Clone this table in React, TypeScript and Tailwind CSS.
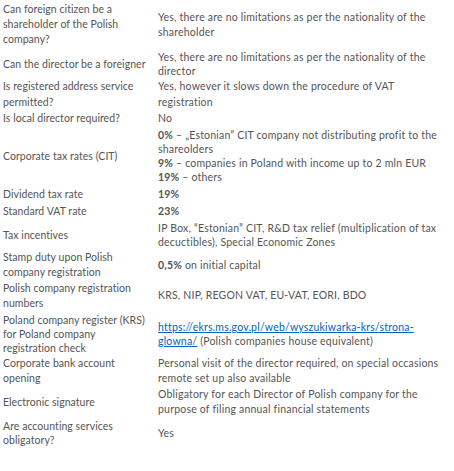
import React from "react";

type Row = { h: string; lead?: string; left: React.ReactNode; right: React.ReactNode };

const B = ({ children }: { children: React.ReactNode }) => (
  <span className="font-bold">{children}</span>
);

const rows: Row[] = [
  {
    h: "h-[49px]",
    lead: "leading-[15px]",
    left: (<>Can foreign citizen be a<br />shareholder of the Polish<br />company?</>),
    right: (<>Yes, there are no limitations as per the nationality of the<br />shareholder</>),
  },
  {
    h: "h-[30px]",
    lead: "leading-[14px]",
    left: (<>Can the director be a foreigner</>),
    right: (<>Yes, there are no limitations as per the nationality of the<br />director</>),
  },
  {
    h: "h-[31px]",
    lead: "leading-[15.5px]",
    left: (<>Is registered address service<br />permitted?</>),
    right: (<>Yes, however it slows down the procedure of VAT<br />registration</>),
  },
  {
    h: "h-[16.5px]",
    left: (<>Is local director required?</>),
    right: (<>No</>),
  },
  {
    h: "h-[59px]",
    lead: "leading-[14px]",
    left: (<>Corporate tax rates (CIT)</>),
    right: (
      <>
        <B>0%</B> – „Estonian” CIT company not distributing profit to the<br />shareolders<br />
        <B>9%</B> – companies in Poland with income up to 2 mln EUR<br />
        <B>19%</B> – others
      </>
    ),
  },
  { h: "h-[17px]", left: (<>Dividend tax rate</>), right: (<B>19%</B>) },
  { h: "h-[17px]", left: (<>Standard VAT rate</>), right: (<B>23%</B>) },
  {
    h: "h-[30px]",
    lead: "leading-[14px]",
    left: (<>Tax incentives</>),
    right: (<>IP Box, “Estonian” CIT, R&amp;D tax relief (multiplication of tax<br />decuctibles), Special Economic Zones</>),
  },
  {
    h: "h-[30.5px]",
    lead: "leading-[14.5px]",
    left: (<>Stamp duty upon Polish<br />company registration</>),
    right: (<><B>0,5%</B> on initial capital</>),
  },
  {
    h: "h-[31.5px]",
    lead: "leading-[15px]",
    left: (<>Polish company registration<br />numbers</>),
    right: (<>KRS, NIP, REGON VAT, EU-VAT, EORI, BDO</>),
  },
  {
    h: "h-[44px]",
    lead: "leading-[14px]",
    left: (<>Poland company register (KRS)<br />for Poland company<br />registration check</>),
    right: (
      <>
        <a className="text-[#0563c1] underline" href="#">https://ekrs.ms.gov.pl/web/wyszukiwarka-krs/strona-<br />glowna/</a> (Polish companies house equivalent)
      </>
    ),
  },
  {
    h: "h-[31px]",
    lead: "leading-[15px]",
    left: (<>Corporate bank account<br />opening</>),
    right: (<>Personal visit of the director required, on special occasions<br />remote set up also available</>),
  },
  {
    h: "h-[31px]",
    lead: "leading-[15px]",
    left: (<>Electronic signature</>),
    right: (<>Obligatory for each Director of Polish company for the<br />purpose of filing annual financial statements</>),
  },
  {
    h: "h-[31px]",
    lead: "leading-[14px]",
    left: (<>Are accounting services<br />obligatory?</>),
    right: (<>Yes</>),
  },
];

export default function App() {
  return (
    <div className="w-[454px] h-[471px] bg-white overflow-hidden text-[#555555] text-[10.5px] font-['Lato',sans-serif]">
      <div className="flex flex-col">
        {rows.map((r, i) => (
          <div key={i} className={`flex ${r.h} ${r.lead ?? "leading-[14.5px]"}`}>
            <div className="w-[158px] pl-[3px] flex items-center whitespace-nowrap tracking-[0.05px]">
              <div>{r.left}</div>
            </div>
            <div className="flex-1 flex items-center whitespace-nowrap tracking-[0.2px]">
              <div>{r.right}</div>
            </div>
          </div>
        ))}
      </div>
    </div>
  );
}
